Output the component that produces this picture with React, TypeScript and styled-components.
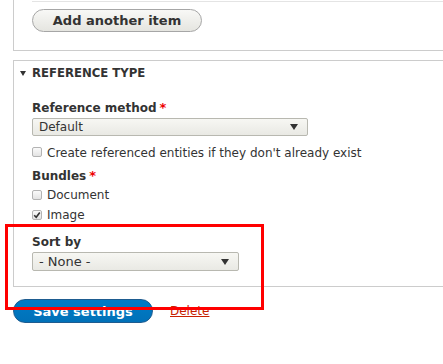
import React from "react";
import styled, { createGlobalStyle } from "styled-components";

const Global = createGlobalStyle`
  html, body { margin: 0; padding: 0; background: #fff; overflow: hidden; }
  body { font-family: "DejaVu Sans", Verdana, sans-serif; color: #333; }
`;

const Page = styled.div`
  position: relative;
  width: 443px;
  height: 364px;
  padding-left: 13px;
  box-sizing: border-box;
`;

const TopPanel = styled.div`
  border: 1px solid #ccc;
  border-top: none;
  border-right: none;
  padding: 1px 0 18px 18px;
`;

const Divider = styled.div`
  border-top: 1px solid #e4e4e4;
`;

const PillButton = styled.button`
  display: block;
  margin-top: 7px;
  height: 23px;
  width: 170px;
  padding: 0;
  border: 1px solid #a6a6a6;
  border-radius: 12px;
  background: linear-gradient(#f8f8f6, #e5e5e0);
  font-family: "DejaVu Sans", Verdana, sans-serif;
  font-weight: bold;
  font-size: 13px;
  color: #333;
  text-align: center;
  line-height: 21px;
`;

const Panel = styled.div`
  margin-top: 9px;
  border: 1px solid #ccc;
  border-right: none;
  padding: 0 0 15px 18px;
`;

const Legend = styled.div`
  display: flex;
  align-items: center;
  gap: 6px;
  height: 24px;
  margin-left: -12px;
  font-weight: bold;
  font-size: 11.7px;
  text-transform: uppercase;
  color: #333;
`;

const Caret = styled.span`
  width: 0;
  height: 0;
  border-left: 3.5px solid transparent;
  border-right: 3.5px solid transparent;
  border-top: 5px solid #333;
`;

const Label = styled.div<{ $mt: number }>`
  margin-top: ${(p) => p.$mt}px;
  height: 18px;
  line-height: 18px;
  font-weight: bold;
  font-size: 12px;
  color: #333;
`;

const Req = styled.span`
  color: #e00;
  margin-left: 3px;
  font-size: 13px;
`;

const Select = styled.div<{ $w: number; $h: number; $fs: number }>`
  margin-top: 1px;
  width: ${(p) => p.$w}px;
  height: ${(p) => p.$h}px;
  box-sizing: border-box;
  border: 1px solid #b8b8b0;
  border-radius: 2px;
  background: linear-gradient(#f7f7f3, #e9e9e4);
  display: flex;
  align-items: center;
  justify-content: space-between;
  padding: 0 9px 0 6px;
  font-size: ${(p) => p.$fs}px;
  color: #333;
`;

const Arrow = styled.span`
  width: 0;
  height: 0;
  border-left: 4px solid transparent;
  border-right: 4px solid transparent;
  border-top: 6px solid #333;
`;

const CheckRow = styled.div<{ $mt: number }>`
  margin-top: ${(p) => p.$mt}px;
  height: 18px;
  display: flex;
  align-items: center;
  gap: 5px;
  font-size: 12px;
  color: #333;
`;

const Box = styled.span<{ $lift: number }>`
  width: 10px;
  height: 10px;
  margin-bottom: ${(p) => p.$lift}px;
  box-sizing: border-box;
  border: 1px solid #b3b3b3;
  border-radius: 2px;
  background: linear-gradient(#fafafa, #e3e3e3);
  display: flex;
  align-items: center;
  justify-content: center;
`;

const Actions = styled.div`
  display: flex;
  align-items: center;
  gap: 17px;
  margin-top: 12px;
`;

const PrimaryButton = styled.button`
  height: 24px;
  width: 140px;
  padding: 0;
  border: 1px solid #1e5c90;
  border-radius: 12px;
  background: linear-gradient(#007bc6, #0071b8);
  color: #fff;
  font-family: "DejaVu Sans", Verdana, sans-serif;
  font-weight: bold;
  font-size: 13px;
  line-height: 21px;
`;

const DeleteLink = styled.a`
  color: #c72100;
  text-decoration: underline;
  font-size: 12px;
`;

const Highlight = styled.div`
  position: absolute;
  left: 5px;
  top: 224px;
  width: 259px;
  height: 86px;
  box-sizing: border-box;
  border: 3px solid #ff0000;
  pointer-events: none;
`;

function Check({
  checked,
  label,
  mt,
  lift = 0,
}: {
  checked?: boolean;
  label: string;
  mt: number;
  lift?: number;
}) {
  return (
    <CheckRow $mt={mt}>
      <Box $lift={lift}>
        {checked && (
          <svg width="8" height="8" viewBox="0 0 8 8">
            <path d="M1.2 4.2 L3.2 6.2 L6.8 1.4" stroke="#333" strokeWidth="1.6" fill="none" />
          </svg>
        )}
      </Box>
      <span>{label}</span>
    </CheckRow>
  );
}

export default function App() {
  return (
    <>
      <Global />
      <Page>
        <TopPanel>
          <Divider />
          <PillButton>Add another item</PillButton>
        </TopPanel>
        <Panel>
          <Legend>
            <Caret />
            <span>Reference type</span>
          </Legend>
          <Label $mt={14}>
            Reference method<Req>*</Req>
          </Label>
          <Select $w={276} $h={18} $fs={12}>
            <span>Default</span>
            <Arrow />
          </Select>
          <Check mt={8} lift={3} label="Create referenced entities if they don't already exist" />
          <Label $mt={5}>
            Bundles<Req>*</Req>
          </Label>
          <Check mt={1} label="Document" />
          <Check mt={2} label="Image" checked />
          <Label $mt={9}>Sort by</Label>
          <Select $w={207} $h={19} $fs={13}>
            <span>- None -</span>
            <Arrow />
          </Select>
        </Panel>
        <Actions>
          <PrimaryButton>Save settings</PrimaryButton>
          <DeleteLink href="#">Delete</DeleteLink>
        </Actions>
        <Highlight />
      </Page>
    </>
  );
}
